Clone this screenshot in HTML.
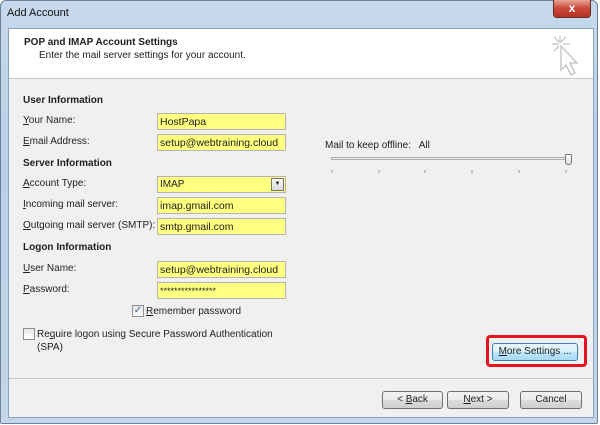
<!DOCTYPE html>
<html><head><meta charset="utf-8"><style>
*{margin:0;padding:0;box-sizing:border-box}
body{width:600px;height:425px;overflow:hidden;background:#fff;font-family:"Liberation Sans",sans-serif;font-size:10px;color:#1e1e1e;position:relative}
.frame{position:absolute;left:0;top:0;width:598px;height:424px;background:linear-gradient(#c6d9ec,#b9cfe6 40%,#c3d6ea);border:1px solid #6d819a;border-radius:6px 6px 2px 2px}
.title{position:absolute;left:7px;top:7px;font-size:11px;color:#111}
.close{position:absolute;left:553px;top:0;width:38px;height:18px;background:linear-gradient(#e9a593,#c9463a 50%,#b73325);border:1px solid #6e2b22;border-top:none;border-radius:0 0 4px 4px;color:#fff;font-weight:bold;font-size:12px;text-align:center;line-height:16px}
.inner{position:absolute;left:8px;top:28px;width:586px;height:390px;background:#f0f0f0;border:1px solid #8ea3bb}
.head{position:absolute;left:0;top:0;width:584px;height:50px;background:#fff;border-bottom:1px solid #c8c8c8}
.abs{position:absolute;white-space:nowrap}
.b{font-weight:bold}
.f{position:absolute;left:156px;width:129px;height:17px;background:#ffff80;border:1px solid #b5b5b5;font-size:10.5px;padding:2px 2px;line-height:12px;white-space:nowrap;overflow:hidden}
.btn{position:absolute;height:18px;border:1px solid #707070;border-radius:3px;background:linear-gradient(#f2f2f2,#ebebeb 50%,#dddddd 51%,#cfcfcf);text-align:center;font-size:10px;line-height:16px}
u{text-decoration:underline}
.cb{position:absolute;width:12px;height:12px;border:1px solid #8f8f8f;background:linear-gradient(#e6e6e6,#fff)}
</style></head><body>
<div class="frame"></div>
<div class="title">Add Account</div>
<div class="close">x</div>
<div class="inner">
 <div class="head">
  <div class="abs b" style="left:15px;top:8px;font-size:10px">POP and IMAP Account Settings</div>
  <div class="abs" style="left:30px;top:21px;font-size:10px">Enter the mail server settings for your account.</div>
  <svg class="abs" style="left:540px;top:5px" width="32" height="44" viewBox="0 0 32 44"><g stroke="#c8c8c8" stroke-width="1.5" fill="none"><path d="M11 2v7M3 10h7M14 10h7M5 3l5 5M17 3l-5 5M5 17l5-5"/><path d="M12 12v24l5-5 5 10 4-2-5-10h7z" fill="#fff"/></g></svg>
 </div>
 <div class="abs b" style="left:14px;top:66px">User Information</div>
 <div class="abs" style="left:14px;top:86px"><u>Y</u>our Name:</div>
 <div class="f" style="left:148px;top:84px">HostPapa</div>
 <div class="abs" style="left:14px;top:107px"><u>E</u>mail Address:</div>
 <div class="f" style="left:148px;top:105px">setup@webtraining.cloud</div>
 <div class="abs b" style="left:14px;top:129px">Server Information</div>
 <div class="abs" style="left:14px;top:149px"><u>A</u>ccount Type:</div>
 <div class="f" style="left:148px;top:147px;font-size:10px">IMAP<span style="position:absolute;right:1px;top:1px;width:13px;height:13px;border:1px solid #777;background:linear-gradient(#fafafa,#d8d8d8);font-size:6px;text-align:center;line-height:11px">▼</span></div>
 <div class="abs" style="left:14px;top:170px"><u>I</u>ncoming mail server:</div>
 <div class="f" style="left:148px;top:168px">imap.gmail.com</div>
 <div class="abs" style="left:14px;top:191px"><u>O</u>utgoing mail server (SMTP):</div>
 <div class="f" style="left:148px;top:189px">smtp.gmail.com</div>
 <div class="abs b" style="left:14px;top:213px">Logon Information</div>
 <div class="abs" style="left:14px;top:234px"><u>U</u>ser Name:</div>
 <div class="f" style="left:148px;top:232px">setup@webtraining.cloud</div>
 <div class="abs" style="left:14px;top:255px"><u>P</u>assword:</div>
 <div class="f" style="left:148px;top:253px;font-size:9px">****************</div>
 <div class="cb" style="left:123px;top:276px;color:#2a5db0;font-size:10px;line-height:10px;text-align:center">✓</div>
 <div class="abs" style="left:137px;top:277px"><u>R</u>emember password</div>
 <div class="cb" style="left:14px;top:299px"></div>
 <div class="abs" style="left:28px;top:299px;line-height:13px">Re<u>q</u>uire logon using Secure Password Authentication<br>(SPA)</div>
 <div class="abs" style="left:316px;top:111px">Mail to keep offline:&nbsp;&nbsp; All</div>
 <div class="abs" style="left:322px;top:128px;width:238px;height:3px;border:1px solid #b0b0b0;background:#e6e6e6"></div>
 <div class="abs" style="left:556px;top:125px;width:7px;height:11px;border:1px solid #777;border-radius:1px 1px 3px 3px;background:linear-gradient(#fff,#ddd)"></div>
 <svg class="abs" style="left:322px;top:141px" width="240" height="4"><g stroke="#999"><path d="M1 0v3M48 0v3M94 0v3M141 0v3M188 0v3M235 0v3"/></g></svg>
 <div class="abs" style="left:477px;top:306px;width:101px;height:32px;border:3px solid #e8141d;border-radius:4px"></div>
 <div class="btn" style="left:483px;top:314px;width:86px;border-color:#3c7fb1;background:linear-gradient(#eaf6fd,#d9f0fc 50%,#bee6fd 51%,#a7d9f5)"><u>M</u>ore Settings ...</div>
 <div class="abs" style="left:0;top:349px;width:584px;height:1px;background:#c8c8c8"></div>
 <div class="btn" style="left:373px;top:362px;width:61px">&lt; <u>B</u>ack</div>
 <div class="btn" style="left:438px;top:362px;width:62px"><u>N</u>ext &gt;</div>
 <div class="btn" style="left:511px;top:362px;width:62px">Cancel</div>
</div>
</body></html>
